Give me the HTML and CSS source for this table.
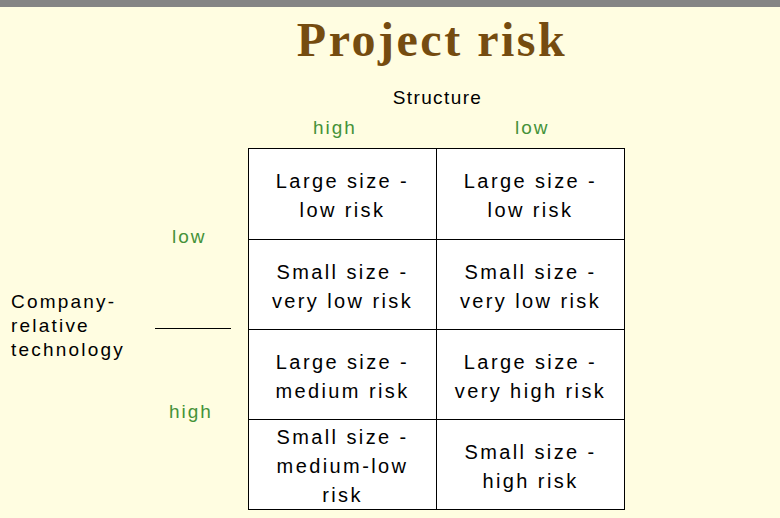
FILE: index.html
```html
<!DOCTYPE html>
<html>
<head>
<meta charset="utf-8">
<link rel="stylesheet" href="styles.css">
</head>
<body>
<div class="topbar"></div>
<h1 class="title">Project risk</h1>
<div class="axis-title">Structure</div>
<div class="col-heads">
  <span class="col-head col-high">high</span>
  <span class="col-head col-low">low</span>
</div>
<div class="matrix-row">
  <div class="side">
    <div class="side-label">Company-<br>relative<br>technology</div>
    <div class="side-scale">
      <span class="row-head row-low">low</span>
      <span class="divider"></span>
      <span class="row-head row-high">high</span>
    </div>
  </div>
  <div class="matrix">
    <div class="cell">Large size -<br>low risk</div>
    <div class="cell">Large size -<br>low risk</div>
    <div class="cell">Small size -<br>very low risk</div>
    <div class="cell">Small size -<br>very low risk</div>
    <div class="cell">Large size -<br>medium risk</div>
    <div class="cell">Large size -<br>very high risk</div>
    <div class="cell">Small size -<br>medium-low<br>risk</div>
    <div class="cell">Small size -<br>high risk</div>
  </div>
</div>
</body>
</html>
```
FILE: styles.css
```css
html, body {
  margin: 0;
  padding: 0;
}
body {
  width: 780px;
  height: 518px;
  overflow: hidden;
  background: #fffde1;
  font-family: "Liberation Sans", Arial, sans-serif;
  color: #000;
}
.topbar {
  height: 7px;
  background: #858585;
}
.title {
  margin: 9px 0 0 0;
  padding-left: 84px;
  text-align: center;
  font-family: "Liberation Serif", "Times New Roman", serif;
  font-weight: bold;
  font-size: 48px;
  line-height: 48px;
  letter-spacing: 2.5px;
  color: #754c10;
}
.axis-title {
  margin-top: 24px;
  padding-left: 95px;
  text-align: center;
  font-size: 19px;
  line-height: 20px;
  letter-spacing: 1.4px;
}
.col-heads {
  display: flex;
  margin-top: 10px;
  height: 20px;
  font-size: 19px;
  line-height: 20px;
  letter-spacing: 2px;
  color: #459239;
}
.col-high {
  margin-left: 313px;
}
.col-low {
  margin-left: 158px;
}
.matrix-row {
  display: flex;
  margin-top: 10px;
}
.side {
  width: 248px;
  display: flex;
}
.side-label {
  width: 144px;
  padding-left: 11px;
  align-self: center;
  margin-bottom: 7px;
  font-size: 19px;
  line-height: 24px;
  letter-spacing: 2.2px;
}
.side-scale {
  width: 93px;
  display: flex;
  flex-direction: column;
  align-items: flex-start;
  font-size: 19px;
  line-height: 20px;
  letter-spacing: 2px;
  color: #459239;
}
.row-low {
  margin-top: 79px;
  margin-left: 17px;
}
.divider {
  display: block;
  margin-top: 81px;
  width: 76px;
  height: 1px;
  background: #000;
}
.row-high {
  margin-top: 73px;
  margin-left: 14px;
}
.matrix {
  display: grid;
  grid-template-columns: 188px 188px;
  grid-template-rows: 91px 90px 90px 90px;
  border-left: 1px solid #000;
  border-top: 1px solid #000;
  background: #fff;
}
.cell {
  box-sizing: border-box;
  border-right: 1px solid #000;
  border-bottom: 1px solid #000;
  display: flex;
  align-items: center;
  justify-content: center;
  text-align: center;
  padding-top: 4px;
  font-size: 20px;
  line-height: 29px;
  letter-spacing: 2.4px;
}
```
